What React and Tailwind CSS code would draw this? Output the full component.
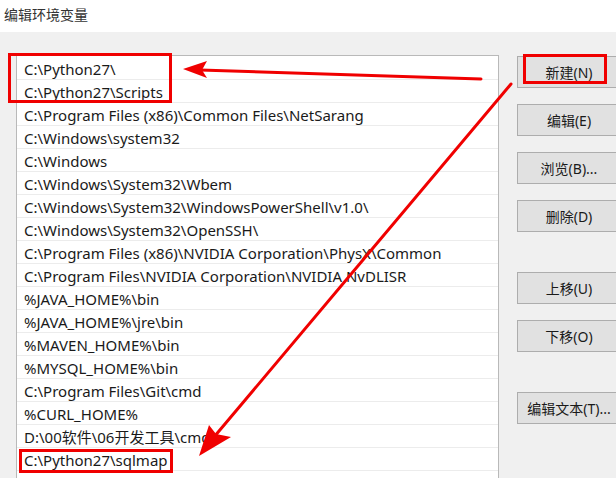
import React from 'react';

const paths = [
  'C:\\Python27\\',
  'C:\\Python27\\Scripts',
  'C:\\Program Files (x86)\\Common Files\\NetSarang',
  'C:\\Windows\\system32',
  'C:\\Windows',
  'C:\\Windows\\System32\\Wbem',
  'C:\\Windows\\System32\\WindowsPowerShell\\v1.0\\',
  'C:\\Windows\\System32\\OpenSSH\\',
  'C:\\Program Files (x86)\\NVIDIA Corporation\\PhysX\\Common',
  'C:\\Program Files\\NVIDIA Corporation\\NVIDIA NvDLISR',
  '%JAVA_HOME%\\bin',
  '%JAVA_HOME%\\jre\\bin',
  '%MAVEN_HOME%\\bin',
  '%MYSQL_HOME%\\bin',
  'C:\\Program Files\\Git\\cmd',
  '%CURL_HOME%',
  'D:\\00软件\\06开发工具\\cmd',
  'C:\\Python27\\sqlmap',
  '',
];

const buttons = [
  { label: '新建(N)' },
  { label: '编辑(E)' },
  { label: '浏览(B)...' },
  { label: '删除(D)' },
  { label: '上移(U)', gap: true },
  { label: '下移(O)' },
  { label: '编辑文本(T)...', gap: true },
];

const Annotations = () => (
  <svg className="absolute inset-0 pointer-events-none" width="616" height="478" viewBox="0 0 616 478">
    <g fill="none" stroke="#f00000" strokeWidth="3">
      <rect x="9.5" y="54.5" width="161" height="47" />
      <rect x="20.5" y="450.5" width="151" height="21" />
      <rect x="524.5" y="55.5" width="81" height="27" />
    </g>
    <g stroke="#f00000" strokeWidth="3" strokeLinecap="round">
      <line x1="481" y1="79" x2="200" y2="70" />
      <line x1="511" y1="84" x2="214" y2="437" />
    </g>
    <g fill="#f00000">
      <polygon points="183,69 207,61 202,70 207,78" />
      <polygon points="199,456 209,425 216,434 231,437" />
    </g>
  </svg>
);

export default function App() {
  return (
    <div className="relative w-[616px] h-[478px] overflow-hidden bg-[#f0f0f0] text-[14px] text-[#1a1a1a] font-['Noto_Sans','Noto_Sans_CJK_SC',sans-serif]">
      <div className="h-[32px] bg-white pl-[4px] pt-[4px] text-[#333]">编辑环境变量</div>

      <div className="flex pt-[23px] pl-[16px]">
        <div className="w-[483px] h-[430px] shrink-0 bg-white border border-[#b9b9b9] border-b-0 pt-[1px]">
          {paths.map((p, i) => (
            <div key={i} className="h-[23px] border-b border-[#ececec] pl-[7px] pt-[1px] text-[15px] leading-[22px] whitespace-nowrap overflow-hidden">
              {p}
            </div>
          ))}
        </div>

        <div className="ml-[18px] pt-[1px] flex flex-col shrink-0">
          {buttons.map((b, i) => (
            <div
              key={i}
              className={`w-[104px] h-[32px] shrink-0 bg-[#e1e1e1] border border-[#adadad] flex items-center justify-center whitespace-nowrap ${i === 0 ? '' : b.gap ? 'mt-[40px]' : 'mt-[16px]'}`}
            >
              {b.label}
            </div>
          ))}
        </div>
      </div>

      <Annotations />
    </div>
  );
}
